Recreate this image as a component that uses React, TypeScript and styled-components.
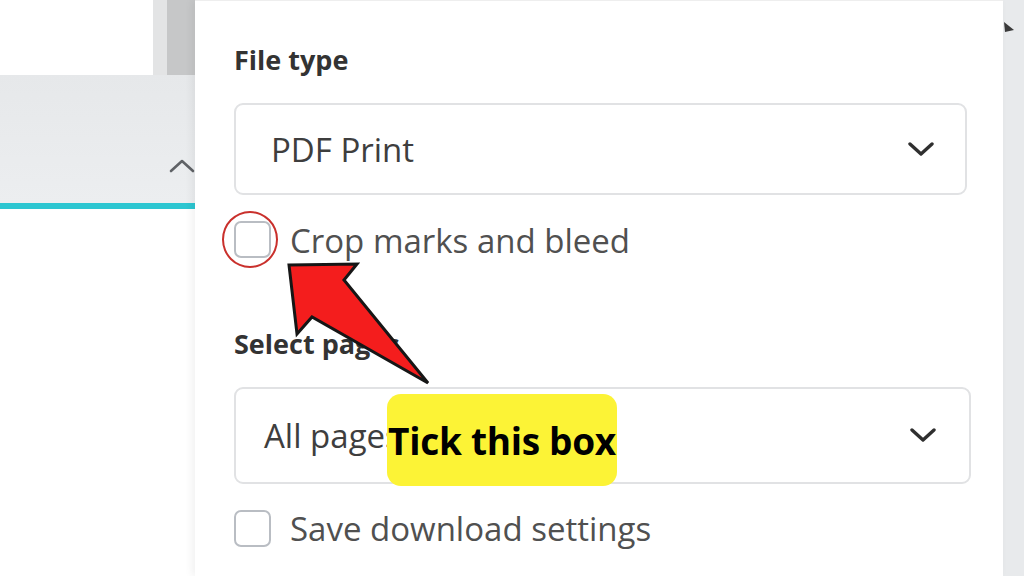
import React from "react";
import styled, { createGlobalStyle } from "styled-components";

const Global = createGlobalStyle`
  html, body { margin: 0; padding: 0; width: 1024px; height: 576px; overflow: hidden; background: #fff; }
  body { font-family: "Open Sans", "Noto Sans", sans-serif; }
`;

const Page = styled.div`
  position: relative;
  display: flex;
  width: 1024px;
  height: 576px;
  overflow: hidden;
  background: #fff;
`;

const Sidebar = styled.div`
  width: 195px;
  flex: none;
  display: flex;
  flex-direction: column;
`;

const Preview = styled.div`
  height: 75px;
  display: flex;
  background: #fff;
`;

const PreviewBlank = styled.div`
  flex: 1;
`;

const ScrollEdge = styled.div`
  width: 14px;
  background: #e3e4e5;
`;

const ScrollThumb = styled.div`
  width: 28px;
  background: #c6c7c8;
`;

const Accordion = styled.div`
  height: 134px;
  display: flex;
  align-items: flex-start;
  justify-content: flex-end;
  background: linear-gradient(180deg, #e6e8ea 0%, #eceef0 100%);
  border-bottom: 6px solid #2cc6d1;
  padding-top: 83px;
  box-sizing: border-box;
`;

const SidebarRest = styled.div`
  flex: 1;
  background: #fff;
`;

const Panel = styled.div`
  width: 808px;
  flex: none;
  display: flex;
  flex-direction: column;
  padding: 44px 0 0 39px;
  box-sizing: border-box;
  background: #fff;
  box-shadow: -3px 0 8px rgba(0, 0, 0, 0.06);
  border-top: 1px solid #eeeeee;
  z-index: 1;
`;

const RightStrip = styled.div`
  flex: 1;
  background: #e8eaec;
  padding: 17px 0 0 1px;
`;

const Label = styled.div<{ $mt?: number }>`
  margin-top: ${(p) => p.$mt ?? 0}px;
  font-size: 27px;
  line-height: 30px;
  font-weight: 700;
  color: #333;
`;

const Select = styled.div<{ $mt: number; $w: number; $h: number; $pl: number; $pr: number }>`
  margin-top: ${(p) => p.$mt}px;
  width: ${(p) => p.$w}px;
  height: ${(p) => p.$h}px;
  box-sizing: border-box;
  border: 2px solid #e1e2e4;
  border-radius: 9px;
  display: flex;
  align-items: center;
  justify-content: space-between;
  padding: 0 ${(p) => p.$pr}px 0 ${(p) => p.$pl}px;
  font-size: 33px;
  color: #3e3e3e;
`;

const CheckRow = styled.div<{ $mt: number }>`
  margin-top: ${(p) => p.$mt}px;
  display: flex;
  align-items: center;
  gap: 19px;
`;

const BoxWrap = styled.div`
  position: relative;
  width: 37px;
  height: 37px;
`;

const Box = styled.div`
  width: 37px;
  height: 37px;
  box-sizing: border-box;
  border: 2px solid #b9bdc3;
  border-radius: 7px;
`;

const Ring = styled.div`
  position: absolute;
  left: -12px;
  top: -10px;
  width: 56px;
  height: 57px;
  box-sizing: border-box;
  border: 2px solid #c9302c;
  border-radius: 50%;
`;

const CheckLabel = styled.span<{ $shift: number }>`
  font-size: 33px;
  line-height: 37px;
  margin-top: ${(p) => p.$shift}px;
  color: #505050;
`;

const Callout = styled.div`
  position: absolute;
  left: 387px;
  top: 394px;
  width: 230px;
  height: 92px;
  box-sizing: border-box;
  background: #fcf336;
  border-radius: 14px;
  display: flex;
  align-items: center;
  justify-content: center;
  font-size: 37px;
  font-weight: 700;
  color: #000;
  letter-spacing: -0.3px;
  z-index: 3;
`;

const ArrowSvg = styled.svg`
  position: absolute;
  left: 280px;
  top: 255px;
  z-index: 3;
`;

const Chevron = ({ up = false, color = "#2f2f2f" }: { up?: boolean; color?: string }) => (
  <svg width="26" height="15" viewBox="0 0 26 15">
    <path
      d={up ? "M2 13 L13 3 L24 13" : "M2 2 L13 12 L24 2"}
      fill="none"
      stroke={color}
      strokeWidth={up ? 2.6 : 3.4}
      strokeLinecap="round"
      strokeLinejoin="round"
    />
  </svg>
);

export default function App() {
  return (
    <Page>
      <Global />
      <Sidebar>
        <Preview>
          <PreviewBlank />
          <ScrollEdge />
          <ScrollThumb />
        </Preview>
        <Accordion>
          <Chevron up color="#5f6266" />
        </Accordion>
        <SidebarRest />
      </Sidebar>
      <Panel>
        <Label>File type</Label>
        <Select $mt={28} $w={733} $h={92} $pl={35} $pr={31}>
          <span>PDF Print</span>
          <Chevron />
        </Select>
        <CheckRow $mt={24}>
          <BoxWrap>
            <Box />
            <Ring />
          </BoxWrap>
          <CheckLabel $shift={3}>Crop marks and bleed</CheckLabel>
        </CheckRow>
        <Label $mt={70}>Select pages</Label>
        <Select $mt={28} $w={737} $h={97} $pl={28} $pr={33}>
          <span>All pages</span>
          <Chevron />
        </Select>
        <CheckRow $mt={26}>
          <BoxWrap>
            <Box />
          </BoxWrap>
          <CheckLabel $shift={0}>Save download settings</CheckLabel>
        </CheckRow>
      </Panel>
      <RightStrip>
        <svg width="12" height="12" viewBox="0 0 12 12">
          <path d="M0 0 L10 8 L1 10 Z" fill="#3a3a3a" />
        </svg>
      </RightStrip>
      <ArrowSvg width="160" height="140" viewBox="280 255 160 140">
        <polygon
          points="289,265 357,264 344,280 428,383 312,317 297,334"
          fill="#f41d1d"
          stroke="#161616"
          strokeWidth="3"
          strokeLinejoin="miter"
        />
      </ArrowSvg>
      <Callout>Tick this box</Callout>
    </Page>
  );
}
